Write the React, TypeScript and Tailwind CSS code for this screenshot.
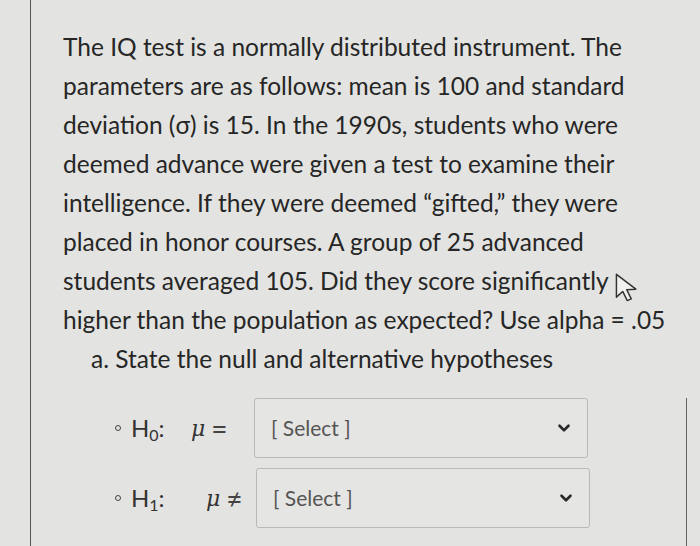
import { ChevronDown } from 'lucide-react'

function Cursor() {
  return (
    <svg width="32" height="32" viewBox="0 0 28 28" className="absolute left-[613px] top-[272px]">
      <path
        d="M3 2 L3 22 L8.5 17 L12.5 25 L16 23.5 L12 15.5 L20 15 Z"
        fill="#f1f1ef"
        stroke="#333"
        strokeWidth="1.3"
        strokeLinejoin="round"
      />
    </svg>
  )
}

function HypothesisRow({ sub, op, muGap, labelW }: { sub: string; op: string; muGap: string; labelW: string }) {
  return (
    <li className="flex items-center">
      <div className={`flex ${labelW} shrink-0 items-center`}>
        <span className="mr-[10px] inline-block h-[6px] w-[6px] rounded-full border-[1.5px] border-[#444]" />
        <span className="w-[48px] text-[24px] text-[#333]">
          H<sub className="text-[16px]">{sub}</sub>:
        </span>
        <span className={`${muGap} font-['DejaVu_Serif',serif] text-[22px] italic text-[#333]`}>μ</span>
        <span className="ml-[6px] text-[28px] leading-none text-[#444]">{op}</span>
      </div>
      <div className="flex h-[60px] w-[334px] items-center justify-between rounded-[3px] border border-[#b9b9b7] bg-[#e5e5e3] pl-[16px] pr-[14px]">
        <span className="text-[21px] text-[#555]">[ Select ]</span>
        <ChevronDown size={18} strokeWidth={3.5} className="text-[#2a2a2a]" />
      </div>
    </li>
  )
}

export default function App() {
  return (
    <div className="relative h-[546px] w-[700px] overflow-hidden bg-[#e3e3e1] font-['Lato','Noto_Sans',sans-serif]">
      <div className="ml-[30px] h-full border-l border-[#555] pl-[32px] pt-[27px]">
        <p className="text-[24.5px] leading-[39px] text-[#262626]">
          The IQ test is a normally distributed instrument. The
          <br />
          parameters are as follows: mean is 100 and standard
          <br />
          deviation (σ) is 15. In the 1990s, students who were
          <br />
          deemed advance were given a test to examine their
          <br />
          intelligence. If they were deemed “gifted,” they were
          <br />
          placed in honor courses. A group of 25 advanced
          <br />
          students averaged 105. Did they score significantly
          <br />
          higher than the population as expected? Use alpha = .05
        </p>
        <p className="pl-[28px] text-[24.5px] leading-[39px] text-[#262626]">
          a. State the null and alternative hypotheses
        </p>
        <div className="mr-[13px] mt-[20px] border-r border-[#666] pb-[20px]">
          <ul className="flex flex-col gap-[10px] pl-[52px]">
            <HypothesisRow sub="0" op="=" muGap="ml-[12px]" labelW="w-[139px]" />
            <HypothesisRow sub="1" op="≠" muGap="ml-[27px]" labelW="w-[141px]" />
          </ul>
        </div>
      </div>
      <Cursor />
    </div>
  )
}
